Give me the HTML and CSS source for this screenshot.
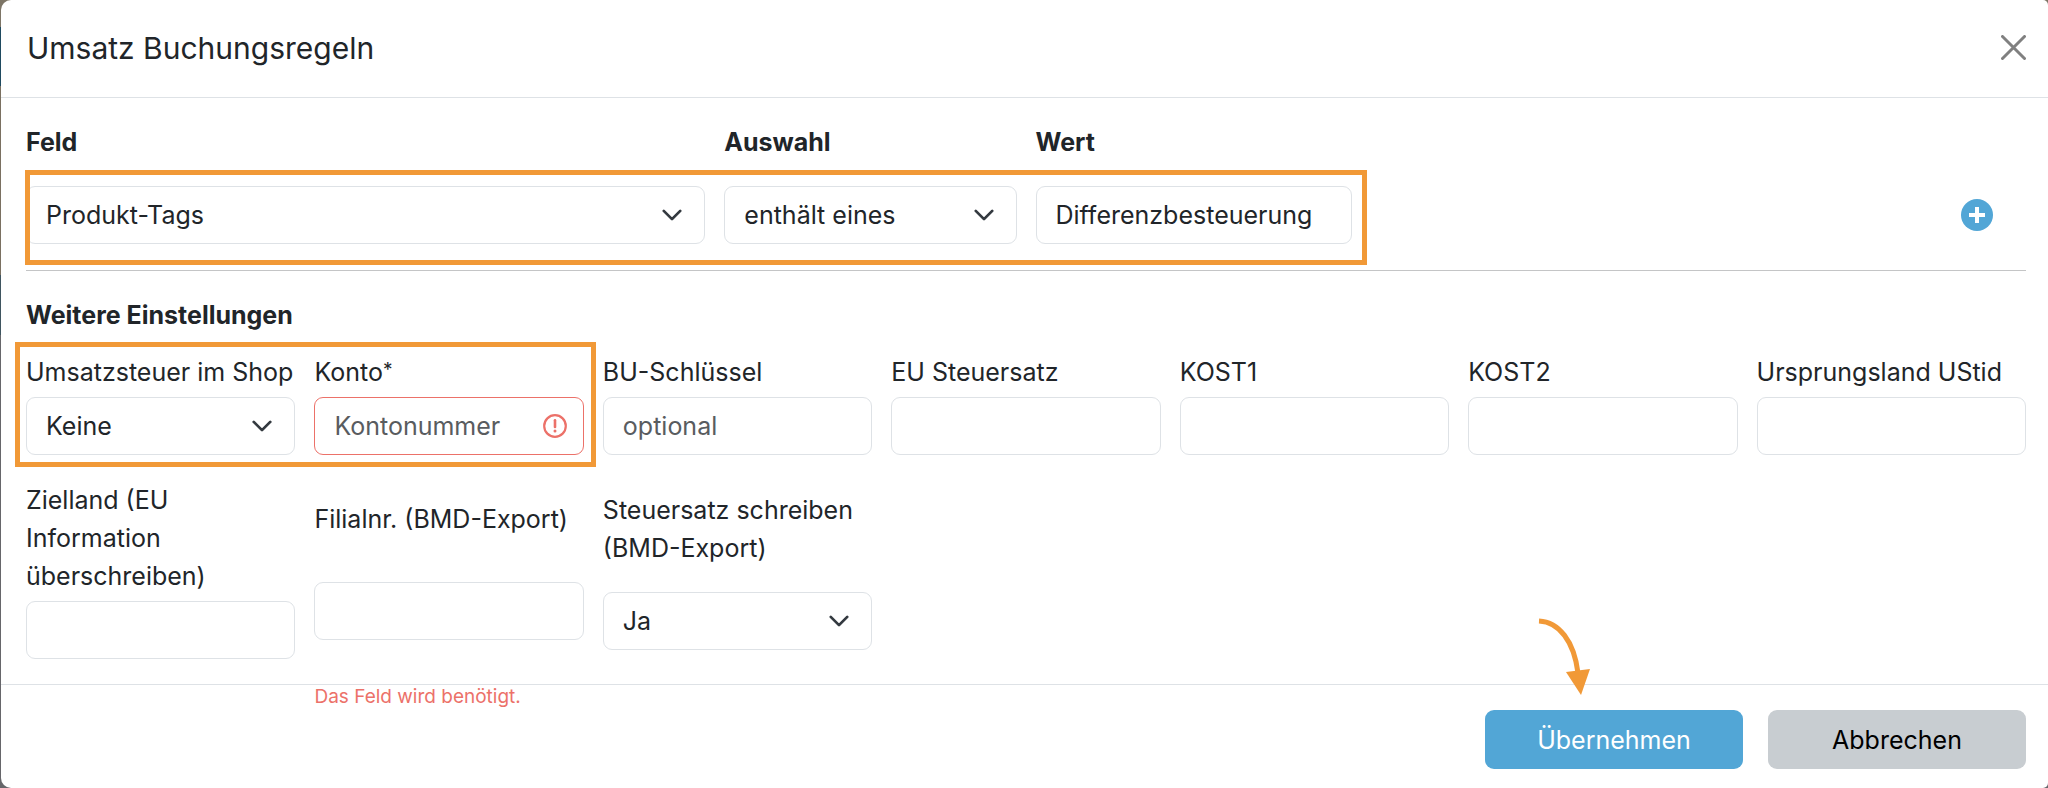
FILE: index.html
```html
<!DOCTYPE html>
<html lang="de">
<head>
  <meta charset="UTF-8">
  <meta name="viewport" content="width=device-width, initial-scale=1">
  <title>Umsatz Buchungsregeln</title>
  <link rel="stylesheet" href="styles.css">
</head>
<body>

  <form class="modal">
    <header class="modal-header">
      <h1>Umsatz Buchungsregeln</h1>
      <button type="button" class="btn-close" aria-label="Schließen">
        <svg viewBox="0 0 25 25" width="25" height="25"><path d="M1.5 1.5l22 22M23.5 1.5l-22 22"/></svg>
      </button>
    </header>

    <main class="modal-body">
      <div class="regel">
        <label class="titel" for="feld">Feld</label>
        <label class="titel" for="auswahl">Auswahl</label>
        <label class="titel titel-wert" for="wert">Wert</label>

        <select class="control" id="feld"><option>Produkt-Tags</option></select>
        <select class="control" id="auswahl"><option>enthält eines</option></select>
        <input class="control" type="text" id="wert" value="Differenzbesteuerung">
        <button type="button" class="btn-plus" aria-label="Regel hinzufügen">
          <svg viewBox="0 0 32 32" width="32" height="32"><circle cx="16" cy="16" r="16"/><path d="M16 8v16M8 16h16"/></svg>
        </button>
        <div class="markierung markierung-regel"></div>
      </div>

      <hr>

      <h2 class="titel">Weitere Einstellungen</h2>

      <div class="einstellungen">
        <div class="feld">
          <label for="ust">Umsatzsteuer im Shop</label>
          <select class="control" id="ust"><option>Keine</option></select>
        </div>
        <div class="feld">
          <label for="konto">Konto<sup>*</sup></label>
          <input class="control ungueltig" type="text" id="konto" placeholder="Kontonummer">
        </div>
        <div class="feld">
          <label for="bu">BU-Schlüssel</label>
          <input class="control" type="text" id="bu" placeholder="optional">
        </div>
        <div class="feld">
          <label for="eu">EU Steuersatz</label>
          <input class="control" type="text" id="eu">
        </div>
        <div class="feld">
          <label for="kost1">KOST1</label>
          <input class="control" type="text" id="kost1">
        </div>
        <div class="feld">
          <label for="kost2">KOST2</label>
          <input class="control" type="text" id="kost2">
        </div>
        <div class="feld">
          <label for="ursprung">Ursprungsland UStid</label>
          <input class="control" type="text" id="ursprung">
        </div>

        <div class="feld">
          <label for="zielland">Zielland (EU Information überschreiben)</label>
          <input class="control" type="text" id="zielland">
        </div>
        <div class="feld">
          <label for="filiale">Filialnr. (BMD-Export)</label>
          <input class="control" type="text" id="filiale">
          <p class="fehler">Das Feld wird benötigt.</p>
        </div>
        <div class="feld">
          <label for="schreiben">Steuersatz schreiben (BMD-Export)</label>
          <select class="control" id="schreiben"><option>Ja</option></select>
        </div>
        <div class="markierung markierung-konto"></div>
      </div>
    </main>

    <footer class="modal-footer">
      <button type="submit" class="btn btn-primary">Übernehmen</button>
      <button type="button" class="btn btn-secondary">Abbrechen</button>
      <svg class="pfeil" viewBox="0 0 54 80" width="54" height="80">
        <path class="linie" d="M0 5C20 6 35 25 39 57"/>
        <path class="spitze" d="M27 56l24-3-9 26z"/>
      </svg>
    </footer>
  </form>

</body>
</html>
```

FILE: styles.css
```css
* {
  box-sizing: border-box;
}

body {
  margin: 0;
  padding-left: 1px;
  background: linear-gradient(#7d7566 0 27px, #1f4a60 27px 86px, #7a7061 86px 275px, #3f5560 275px 335px, #66666a 335px);
  color: #212529;
  font-family: Inter, "Liberation Sans", sans-serif;
  font-size: 25px;
  line-height: 38px;
}

.modal {
  min-height: 100vh;
  background: #fff;
  border-radius: 10px 5px 5px 10px;
}

.modal-header {
  display: flex;
  align-items: center;
  justify-content: space-between;
  height: 98px;
  padding: 0 22px 2px 26px;
  border-bottom: 1px solid #dee2e6;
}

h1 {
  margin: 0;
  font-size: 30px;
  font-weight: 400;
}

button {
  font: inherit;
  border: none;
  cursor: pointer;
}

.btn-close,
.btn-plus {
  display: flex;
  padding: 0;
  background: none;
}

.btn-close path {
  stroke: #808080;
  stroke-width: 3;
  stroke-linecap: round;
}

.modal-body {
  padding: 25px 22px 25px 25px;
}

.regel {
  position: relative;
  display: grid;
  grid-template-columns: 679fr 292fr 316fr 655fr;
  gap: 25px 19px;
}

.titel {
  margin: 0;
  font-size: 25px;
  font-weight: 700;
}

.titel-wert {
  grid-column: 3 / 5;
}

.control {
  width: 100%;
  height: 58px;
  padding: 0 19px;
  border: 1px solid #dee2e6;
  border-radius: 9px;
  background-color: #fff;
  color: inherit;
  font: inherit;
  appearance: none;
}

.control::placeholder {
  color: #595c5f;
  opacity: 1;
}

select.control {
  background: #fff url("data:image/svg+xml,%3Csvg xmlns='http://www.w3.org/2000/svg' viewBox='0 0 16 16'%3E%3Cpath fill='none' stroke='%23343a40' stroke-linecap='round' stroke-linejoin='round' stroke-width='2' d='m2 5 6 6 6-6'/%3E%3C/svg%3E") no-repeat right 21px center / 22px 22px;
}

.control.ungueltig {
  border-color: #ec7169;
  background: #fff url("data:image/svg+xml,%3Csvg xmlns='http://www.w3.org/2000/svg' viewBox='0 0 24 24'%3E%3Ccircle cx='12' cy='12' r='10.8' fill='none' stroke='%23ec7169' stroke-width='2.2'/%3E%3Cpath d='M12 6.3v6.6' stroke='%23ec7169' stroke-width='2.6' stroke-linecap='round'/%3E%3Ccircle cx='12' cy='17' r='1.5' fill='%23ec7169'/%3E%3C/svg%3E") no-repeat right 16px center / 24px 24px;
}

.btn-plus {
  align-self: center;
  justify-self: end;
  margin-right: 33px;
}

.btn-plus circle {
  fill: #52a6d6;
}

.btn-plus path {
  stroke: #fff;
  stroke-width: 4;
}

hr {
  margin: 26px 0 25px;
  border: none;
  border-top: 1px solid #c4c5c6;
}

.einstellungen {
  position: relative;
  display: grid;
  grid-template-columns: repeat(7, minmax(0, 1fr));
  gap: 26px 19px;
  margin-top: 19px;
}

.feld {
  position: relative;
  display: flex;
  flex-direction: column;
  justify-content: space-around;
}

.feld label {
  margin-bottom: 6px;
}

sup {
  font-size: 19px;
  line-height: 0;
  vertical-align: 5px;
}

.fehler {
  position: absolute;
  top: 100%;
  left: 0;
  margin: 19px 0 0;
  color: #ec7169;
  font-size: 19px;
  white-space: nowrap;
}

/* orange Hervorhebungen */
.markierung {
  position: absolute;
  border: 5px solid #f19937;
  pointer-events: none;
}

.markierung-regel {
  grid-area: 2 / 1 / 3 / 4;
  inset: -16px -15px -21px -1px;
}

.markierung-konto {
  grid-area: 1 / 1 / 2 / 3;
  inset: -11px -12px -12px -11px;
}

.modal-footer {
  position: relative;
  display: flex;
  justify-content: flex-end;
  gap: 25px;
  padding: 25px 22px 19px;
  border-top: 1px solid #dee2e6;
}

.btn {
  width: 258px;
  height: 59px;
  border-radius: 9px;
}

.btn-primary {
  background: #52a6d6;
  color: #fff;
}

.btn-secondary {
  background: #c8cdd1;
  color: #000;
}

.pfeil {
  position: absolute;
  top: -69px;
  right: 455px;
  overflow: visible;
  pointer-events: none;
}

.linie {
  fill: none;
  stroke: #f19937;
  stroke-width: 5;
}

.spitze {
  fill: #f19937;
}
```
